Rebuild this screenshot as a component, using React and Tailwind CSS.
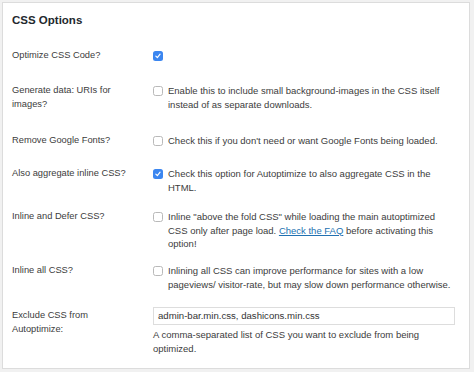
import React from "react";

const Box = ({ checked }) =>
  checked ? (
    <span className="mt-[1.5px] flex h-[10px] w-[10px] shrink-0 items-center justify-center rounded-[2.5px] bg-[#3b86f0]">
      <svg viewBox="0 0 10 10" className="h-[8px] w-[8px]">
        <path d="M2.3 5.2 L4.2 7 L7.6 2.8" fill="none" stroke="white" strokeWidth="1.5" strokeLinecap="round" strokeLinejoin="round" />
      </svg>
    </span>
  ) : (
    <span className="mt-[1.5px] block h-[10px] w-[10px] shrink-0 rounded-[2.5px] border border-[#b9b9b9] bg-white" />
  );

const Row = ({ label, checked, children, className }) => (
  <div className={"grid grid-cols-[141px_1fr] " + className}>
    <div className="text-[9.3px]">{label}</div>
    <div className="flex gap-[5px]">
      <Box checked={checked} />
      <div className="whitespace-nowrap">{children}</div>
    </div>
  </div>
);

const App = () => {
  return (
    <div className="h-[372px] w-[474px] bg-[#f1f1f1] pl-[2px] pt-[2px]" style={{ fontFamily: '"Liberation Sans", Arial, sans-serif' }}>
      <div className="h-[367px] w-[468px] border border-[#dcdcdc] bg-white px-[9px] pt-[9px] text-[9.5px] leading-[13.5px] text-[#3c3c3c]">
        <h2 className="text-[11.5px] font-bold leading-[16px] text-[#23282d]">CSS Options</h2>

        <Row className="mt-[21px]" label="Optimize CSS Code?" checked />

        <Row className="mt-[21.5px]" label={<>Generate data: URIs for<br />images?</>}>
          Enable this to include small background-images in the CSS itself
          <br />
          instead of as separate downloads.
        </Row>

        <Row className="mt-[23px]" label="Remove Google Fonts?">
          Check this if you don't need or want Google Fonts being loaded.
        </Row>

        <Row className="mt-[19.5px]" label="Also aggregate inline CSS?" checked>
          Check this option for Autoptimize to also aggregate CSS in the
          <br />
          HTML.
        </Row>

        <Row className="mt-[16px]" label="Inline and Defer CSS?">
          Inline "above the fold CSS" while loading the main autoptimized
          <br />
          CSS only after page load.{" "}
          <a className="text-[#2271b1] underline">Check the FAQ</a> before activating this
          <br />
          option!
        </Row>

        <Row className="mt-[13.5px]" label="Inline all CSS?">
          Inlining all CSS can improve performance for sites with a low
          <br />
          pageviews/ visitor-rate, but may slow down performance otherwise.
        </Row>

        <div className="mt-[16px] grid grid-cols-[141px_1fr]">
          <div className="pt-[2px] text-[9.3px]">
            Exclude CSS from
            <br />
            Autoptimize:
          </div>
          <div>
            <div className="flex h-[18px] w-[302px] items-center border border-[#dddddd] bg-white px-[4px] text-[9.6px] text-[#333]">
              admin-bar.min.css, dashicons.min.css
            </div>
            <div className="mt-[3px] whitespace-nowrap">
              A comma-separated list of CSS you want to exclude from being
              <br />
              optimized.
            </div>
          </div>
        </div>
      </div>
    </div>
  );
};

export default App;
